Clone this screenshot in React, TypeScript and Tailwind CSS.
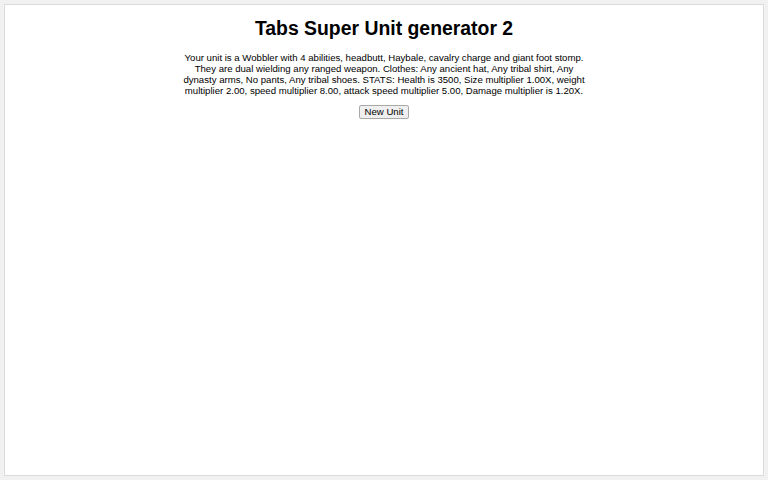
import React, { useState } from "react";

type Unit = { text: string };

const first: Unit = {
  text: "Your unit is a Wobbler with 4 abilities, headbutt, Haybale, cavalry charge and giant foot stomp. They are dual wielding any ranged weapon. Clothes: Any ancient hat, Any tribal shirt, Any dynasty arms, No pants, Any tribal shoes. STATS: Health is 3500, Size multiplier 1.00X, weight multiplier 2.00, speed multiplier 8.00, attack speed multiplier 5.00, Damage multiplier is 1.20X.",
};

export default function App() {
  const [unit] = useState<Unit>(first);
  return (
    <div
      className="w-full h-[480px] bg-[#f1f1f1] p-[4px]"
      style={{ fontFamily: '"Liberation Sans", Arial, sans-serif' }}
    >
      <div className="h-full bg-white border border-[#dcdcdc] flex flex-col items-center text-black">
        <h1 className="mt-[11px] text-[19.4px] font-bold leading-[24px]">
          Tabs Super Unit generator 2
        </h1>
        <p className="mt-[12px] w-[412px] text-center text-[9.6px] leading-[11px]">
          {unit.text}
        </p>
        <button className="mt-[9px] px-[5px] h-[14px] text-[9.6px] leading-[12px] border border-[#a9a9a9] rounded-[2px] bg-[#efefef]">
          New Unit
        </button>
      </div>
    </div>
  );
}
